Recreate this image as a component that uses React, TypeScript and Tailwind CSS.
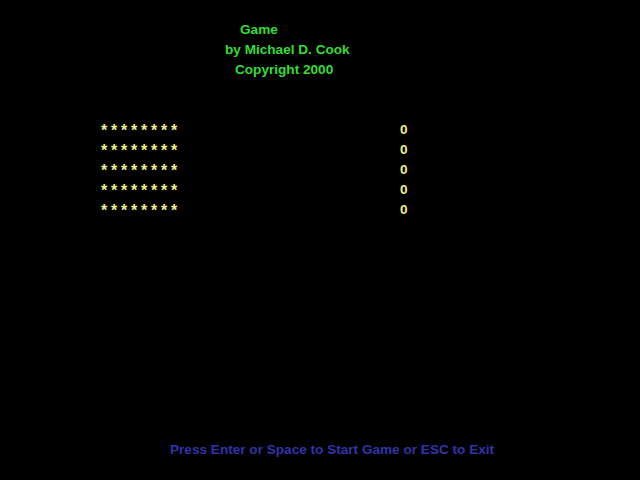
const rows = [0, 0, 0, 0, 0];

export default function App() {
  return (
    <div
      className="flex h-[480px] w-[640px] flex-col bg-black text-[13.6px] font-bold leading-[20px]"
      style={{ fontFamily: '"Liberation Sans", Arial, sans-serif' }}
    >
      <div className="flex flex-col pt-[20px] text-[#33dd33]">
        <div className="pl-[240px]">Game</div>
        <div className="pl-[225px]">by Michael D. Cook</div>
        <div className="pl-[235px]">Copyright 2000</div>
      </div>

      <div className="mt-[38px] flex flex-col text-[#eeee88]">
        {rows.map((score, i) => (
          <div key={i} className="flex h-[20px] items-center">
            <div className="flex pl-[99px] pt-[5px] text-[16px]">
              {Array.from({ length: 8 }).map((_, j) => (
                <span key={j} className="w-[10px] text-center">*</span>
              ))}
            </div>
            <div className="pl-[221px] pt-[3px]">{score}</div>
          </div>
        ))}
      </div>

      <div className="mt-auto pb-[20px] pl-[170px] text-[#3333aa]">
        Press Enter or Space to Start Game or ESC to Exit
      </div>
    </div>
  );
}
